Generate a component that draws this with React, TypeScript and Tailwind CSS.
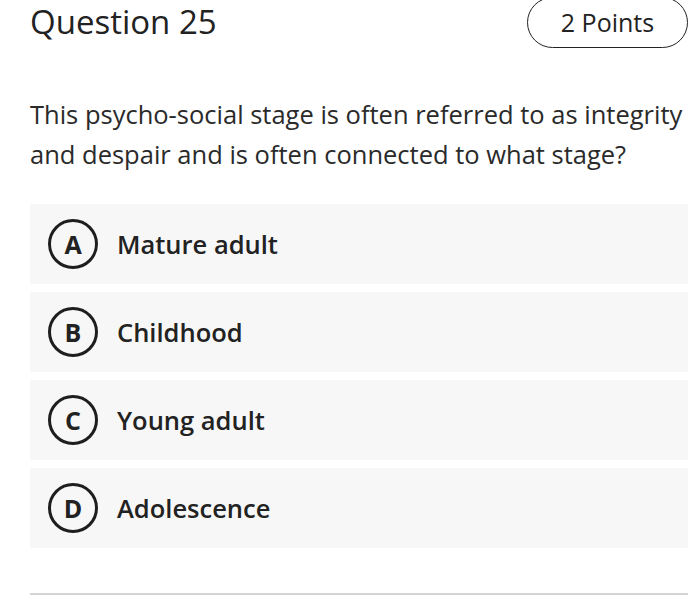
const options = [
  { letter: "A", text: "Mature adult" },
  { letter: "B", text: "Childhood" },
  { letter: "C", text: "Young adult" },
  { letter: "D", text: "Adolescence" },
];

export default function App() {
  return (
    <div className="h-[598px] w-[700px] overflow-hidden bg-white pl-[30px] pr-[12px] font-['Open_Sans',sans-serif] text-[#222]">
      <div className="flex items-start justify-between">
        <h1 className="text-[33px] leading-[45px] font-normal -mt-[1px]">Question 25</h1>
        <div className="-mt-[3px] flex h-[51px] w-[161px] items-center justify-center rounded-full border-[1.5px] border-[#222] text-[25px]">
          2 Points
        </div>
      </div>

      <p className="mt-[46px] whitespace-nowrap text-[25.5px] leading-[40px] text-[#2a2a2a]">
        This psycho-social stage is often referred to as integrity
        <br />
        and despair and is often connected to what stage?
      </p>

      <div className="mt-[30px] flex flex-col gap-[8px]">
        {options.map((o) => (
          <div key={o.letter} className="flex h-[80px] items-center gap-[19px] bg-[#f7f7f7] pl-[18px]">
            <div className="flex h-[50px] w-[50px] shrink-0 items-center justify-center rounded-full border-[3px] border-[#1e1e1e] text-[25px] leading-none font-bold">
              {o.letter}
            </div>
            <span className="text-[25.5px] font-semibold text-[#222]">{o.text}</span>
          </div>
        ))}
      </div>

      <div className="mt-[45px] h-[2px] bg-[#d4d4d4]" />
    </div>
  );
}
